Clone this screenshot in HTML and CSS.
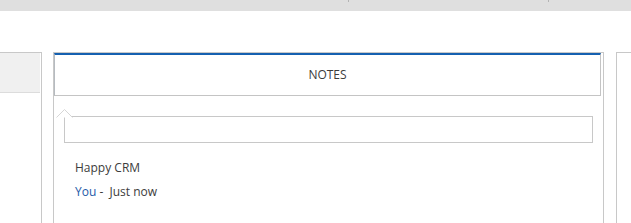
FILE: index.html
```html
<!DOCTYPE html>
<html lang="en">
<head>
    <meta charset="UTF-8">
    <title>Notes</title>
    <link rel="stylesheet" href="styles.css">
</head>
<body>
    <div class="topbar">
        <span class="tick"></span>
        <span class="tick"></span>
    </div>

    <div class="workspace">
        <div class="side-panel">
            <div class="side-head"></div>
        </div>

        <div class="notes-panel">
            <div class="notes-header">NOTES</div>

            <div class="note-input">
                <svg class="tail" width="18" height="10" viewBox="0 0 18 10">
                    <polyline points="0.5,9.5 8.5,1.5 16.5,9.5" fill="#fff" stroke="#d6d6d6" stroke-width="1"/>
                </svg>
            </div>

            <div class="note">
                <div class="note-title">Happy CRM</div>
                <div class="note-meta"><span class="author">You</span> -&nbsp; Just now</div>
            </div>
        </div>

        <div class="right-panel"></div>
    </div>
</body>
</html>
```

FILE: styles.css
```css
body {
    margin: 0;
    background: #fff;
    font-family: 'Open Sans', 'Noto Sans', sans-serif;
    color: #3c3c3c;
    overflow: hidden;
}

.topbar {
    height: 11px;
    background: #dfdfdf;
    display: flex;
    padding-left: 348px;
    gap: 199px;
}

.tick {
    width: 1px;
    height: 2px;
    background: #b4b4b4;
}

.workspace {
    display: flex;
    margin-top: 41px;
    height: 171px;
}

.side-panel {
    width: 42px;
    border-top: 1px solid #c8c8c8;
    border-right: 1px solid #c8c8c8;
    box-sizing: border-box;
}

.side-head {
    width: 40px;
    height: 39px;
    background: #f0f0f0;
    border-bottom: 1px solid #dcdcdc;
}

.notes-panel {
    margin-left: 11px;
    width: 551px;
    box-sizing: border-box;
    border: 1px solid #c8c8c8;
    border-bottom: none;
}

.notes-header {
    margin-right: 2px;
    height: 38px;
    padding-bottom: 2px;
    border-top: 2px solid #1560b0;
    border-left: 1px solid #b6bbc0;
    border-right: 1px solid #c4c4c4;
    border-bottom: 1px solid #c4c4c4;
    display: flex;
    align-items: center;
    justify-content: center;
    font-size: 12px;
}

.note-input {
    position: relative;
    margin: 20px 0 0 10px;
    width: 529px;
    height: 27px;
    box-sizing: border-box;
    border: 1px solid #c8c8c8;
}

.tail {
    position: absolute;
    left: -9px;
    top: -9px;
}

.note {
    padding: 13px 0 0 21px;
    font-size: 12px;
    line-height: 24px;
}

.author {
    color: #1e5aa8;
}

.right-panel {
    margin-left: 12px;
    flex: 1;
    border-top: 1px solid #c8c8c8;
    border-left: 1px solid #c8c8c8;
}
```
